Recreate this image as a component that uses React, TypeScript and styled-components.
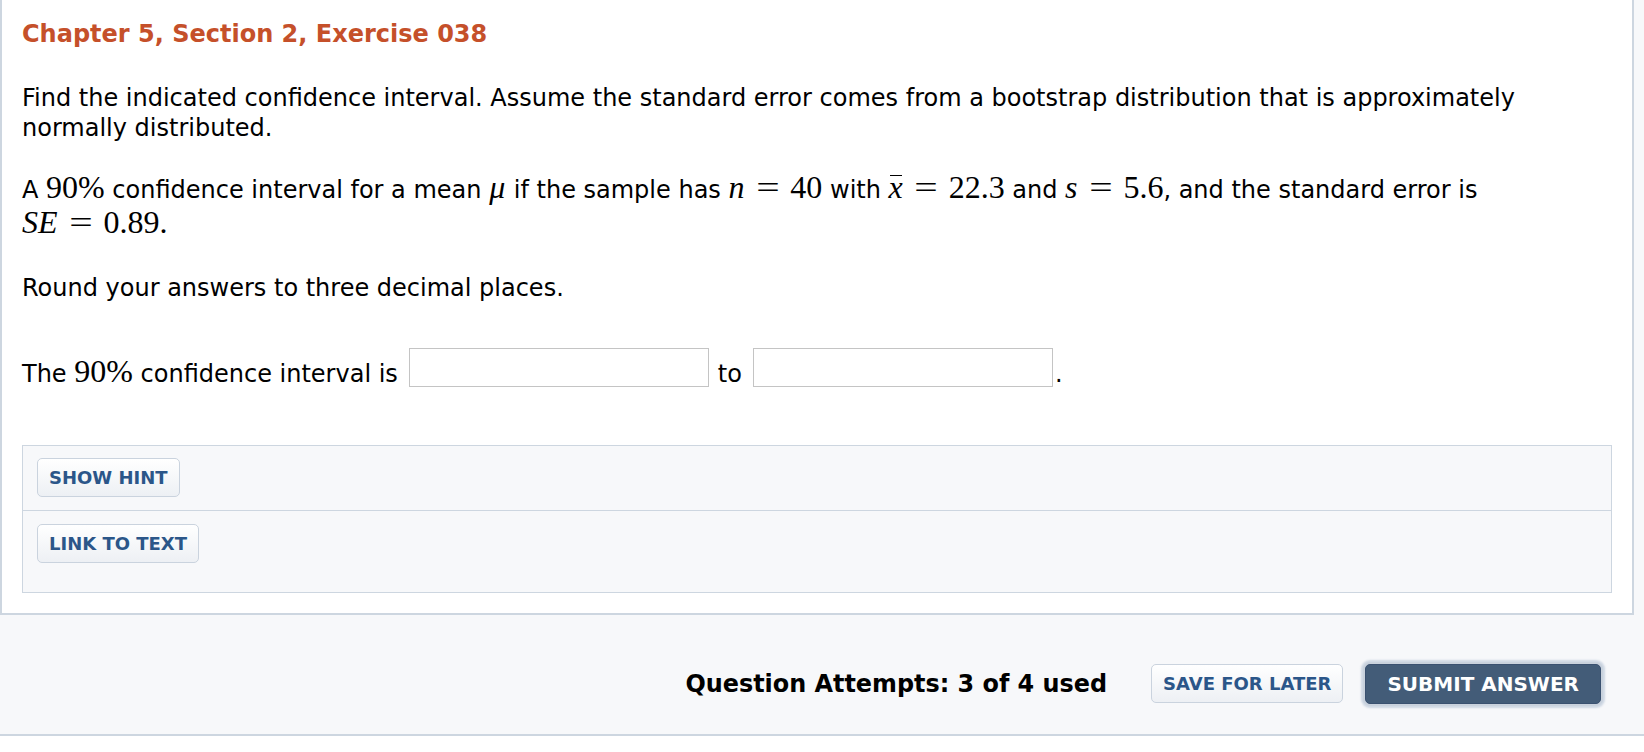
import React from "react";
import styled, { createGlobalStyle } from "styled-components";

const Global = createGlobalStyle`
  html, body { margin: 0; padding: 0; background: #ffffff; }
  body { font-family: "DejaVu Sans", Verdana, sans-serif; color: #000; }
  * { box-sizing: border-box; }
`;

const Page = styled.div`
  background: #f7f8fa;
  border-bottom: 2px solid #cdd6e0;
`;

const Panel = styled.section`
  width: 1634px;
  background: #ffffff;
  border: 2px solid #cdd6e0;
  border-top: none;
  padding: 20px 20px 20px 20px;
`;

const Title = styled.h1`
  margin: 0 0 36px;
  font-size: 24px;
  line-height: 28px;
  font-weight: bold;
  color: #c5502a;
`;

const Para = styled.p<{ $lh?: number; $mb?: number }>`
  margin: 0 0 ${(p) => p.$mb ?? 30}px;
  font-size: 24px;
  line-height: ${(p) => p.$lh ?? 29.5}px;
`;

const M = styled.span`
  font-family: "Liberation Serif", "Times New Roman", serif;
  font-size: 32px;
  line-height: 0.9;
  white-space: nowrap;
`;

const I = styled.i`
  font-style: italic;
  padding-right: 0.03em;
`;

const Eq = styled.span`
  display: inline-block;
  margin: 0 0.42em;
  transform: scaleX(1.3);
`;

const Bar = styled.span`
  position: relative;
  &::before {
    content: "";
    position: absolute;
    left: 0.06em;
    right: 0.04em;
    top: 0.2em;
    border-top: 1.5px solid #000;
  }
`;

const AnswerRow = styled.div`
  display: flex;
  align-items: flex-end;
  margin: 44px 0 58px;
  font-size: 24px;
  line-height: 24.6px;
`;

const RowText = styled.span`
  white-space: nowrap;
`;

const AnswerInput = styled.input<{ $last?: boolean }>`
  width: 300px;
  height: 39px;
  border: 1px solid #c4c4c4;
  background: #fff;
  margin: 0 ${(p) => (p.$last ? 2 : 9)}px 0 11px;
  padding: 0 6px;
  font-size: 20px;
  outline: none;
`;

const Toolbox = styled.div`
  border: 1px solid #cdd6e0;
  background: #f7f8fa;
`;

const ToolSection = styled.div<{ $last?: boolean }>`
  padding: ${(p) => (p.$last ? "13px 14px 29px" : "12px 14px 13px")};
  border-bottom: ${(p) => (p.$last ? "none" : "1px solid #cdd6e0")};
`;

const LightButton = styled.button`
  height: 39px;
  padding: 0 11px;
  border: 1px solid #cad3de;
  border-radius: 5px;
  background: linear-gradient(#ffffff, #edf0f4);
  color: #2b5689;
  font-family: "DejaVu Sans", Verdana, sans-serif;
  font-weight: bold;
  font-size: 18px;
  letter-spacing: 0;
  cursor: pointer;
`;

const Footer = styled.footer`
  display: flex;
  justify-content: flex-end;
  align-items: center;
  padding: 46px 40px 27px 0;
`;

const Attempts = styled.div`
  font-size: 23.9px;
  font-weight: bold;
  line-height: 28px;
  margin-right: 44px;
`;

const SaveButton = styled(LightButton)`
  margin-right: 19px;
`;

const SubmitButton = styled.button`
  height: 40px;
  padding: 0 21px;
  margin: 3px;
  border: 1px solid #3a5170;
  border-radius: 5px;
  background: #435c78;
  color: #ffffff;
  font-family: "DejaVu Sans", Verdana, sans-serif;
  font-weight: bold;
  font-size: 20px;
  box-shadow: 0 0 0 2px #c9d2dd, 0 0 2px 4px rgba(190, 202, 218, 0.7);
  cursor: pointer;
`;

export default function App() {
  return (
    <>
      <Global />
      <Page>
        <Panel>
          <Title>Chapter 5, Section 2, Exercise 038</Title>
          <Para>
            Find the indicated confidence interval. Assume the standard error comes from a bootstrap distribution that is approximately
            <br />
            normally distributed.
          </Para>
          <Para $lh={33.5} $mb={32}>
            A <M>90%</M> confidence interval for a mean <M><I>μ</I></M> if the sample has{" "}
            <M>
              <I>n</I>
              <Eq>=</Eq>40
            </M>{" "}
            with{" "}
            <M>
              <Bar>
                <I>x</I>
              </Bar>
              <Eq>=</Eq>22.3
            </M>{" "}
            and{" "}
            <M>
              <I>s</I>
              <Eq>=</Eq>5.6
            </M>
            , and the standard error is
            <br />
            <M>
              <I>SE</I>
              <Eq>=</Eq>0.89.
            </M>
          </Para>
          <Para>Round your answers to three decimal places.</Para>
          <AnswerRow>
            <RowText>
              The <M>90%</M> confidence interval is
            </RowText>
            <AnswerInput type="text" aria-label="lower bound" />
            <RowText>to</RowText>
            <AnswerInput type="text" aria-label="upper bound" $last />
            <RowText>.</RowText>
          </AnswerRow>
          <Toolbox>
            <ToolSection>
              <LightButton>SHOW HINT</LightButton>
            </ToolSection>
            <ToolSection $last>
              <LightButton>LINK TO TEXT</LightButton>
            </ToolSection>
          </Toolbox>
        </Panel>
        <Footer>
          <Attempts>Question Attempts: 3 of 4 used</Attempts>
          <SaveButton>SAVE FOR LATER</SaveButton>
          <SubmitButton>SUBMIT ANSWER</SubmitButton>
        </Footer>
      </Page>
    </>
  );
}
